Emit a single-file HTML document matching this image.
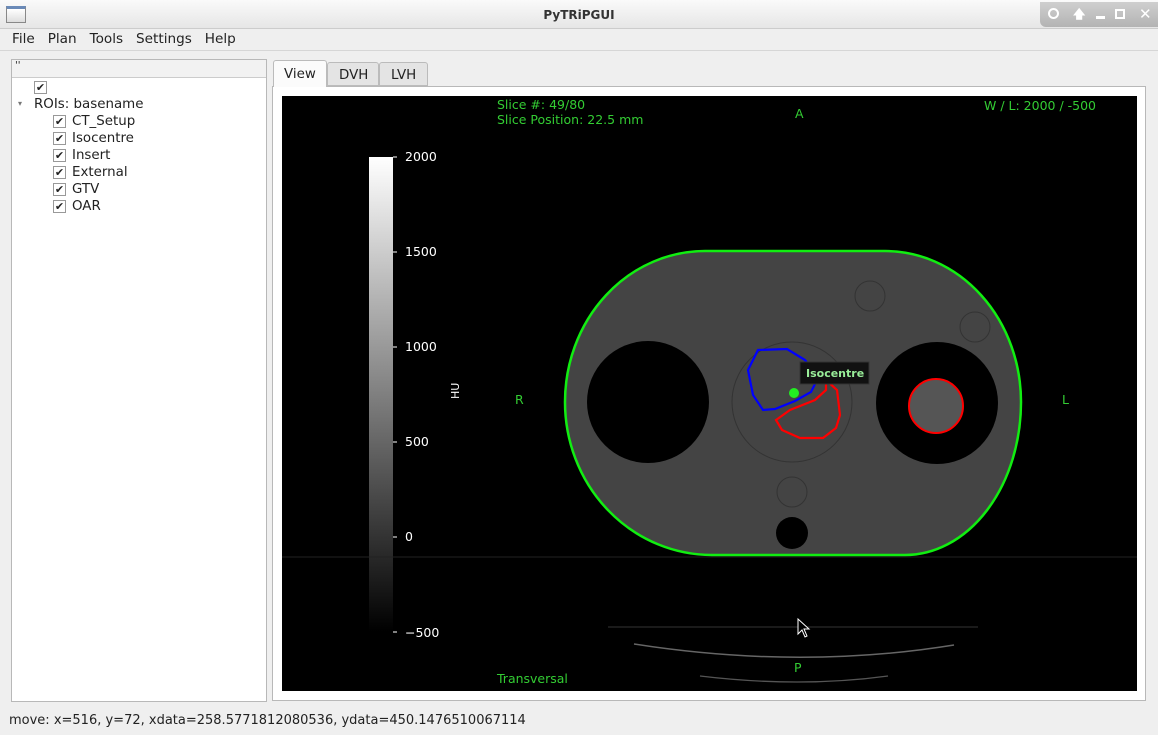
<!DOCTYPE html>
<html><head><meta charset="utf-8"><style>
*{margin:0;padding:0;box-sizing:border-box}
body{width:1158px;height:735px;background:#efefef;font-family:"DejaVu Sans","Liberation Sans",sans-serif;font-size:13.4px;color:#222;position:relative;overflow:hidden}
.a{position:absolute;white-space:nowrap}
.cb{position:absolute;width:13px;height:13px;border:1px solid #999;background:#fff;font-size:11px;line-height:11px;text-align:center;color:#222}
</style></head><body>
<div class="a" style="left:0;top:0;width:1158px;height:29px;background:linear-gradient(#fafafa,#e6e6e6);border-bottom:1px solid #ccc"></div>
<div class="a" style="left:6px;top:6px;width:20px;height:17px;border:1px solid #888;background:linear-gradient(#fff,#ddd);border-top:3px solid #6a8ab8"></div>
<div class="a" style="left:0;width:1158px;top:8px;text-align:center;font-weight:bold;font-size:12px;color:#333">PyTRiPGUI</div>
<div class="a" style="left:1040px;top:2px;width:118px;height:25px;background:linear-gradient(#cfcfcf,#b3b3b3);border-radius:0 0 0 6px;color:#fff;font-size:12px;font-weight:bold">
<span class="a" style="left:8px;top:6px;width:11px;height:11px;border:2px solid #fff;border-radius:50%"></span><span class="a" style="left:33px;top:3px">🡅</span><span class="a" style="left:56px;top:14px;width:9px;height:3px;background:#fff"></span><span class="a" style="left:75px;top:7px;width:10px;height:10px;border:2px solid #fff"></span><span class="a" style="left:99px;top:3px;font-size:15px">✕</span></div>
<div class="a" style="left:12px;top:31px;font-size:13.6px">File&nbsp;&nbsp;&nbsp;Plan&nbsp;&nbsp;&nbsp;Tools&nbsp;&nbsp;&nbsp;Settings&nbsp;&nbsp;&nbsp;Help</div>
<div class="a" style="left:0;top:50px;width:1158px;height:1px;background:#d6d6d6"></div>
<div class="a" style="left:11px;top:59px;width:256px;height:643px;background:#fff;border:1px solid #b8b8b8"></div>
<div class="a" style="left:12px;top:60px;width:254px;height:18px;background:#f2f2f2;border-bottom:1px solid #ccc;font-size:10px;padding-left:3px">''</div>
<div class="cb" style="left:34px;top:81px">✔</div>
<div class="a" style="left:18px;top:99px;font-size:8px;color:#777">▾</div>
<div class="a" style="left:34px;top:97px">ROIs: basename</div>
<div class="cb" style="left:53px;top:115px">✔</div><div class="a" style="left:72px;top:114px">CT_Setup</div>
<div class="cb" style="left:53px;top:132px">✔</div><div class="a" style="left:72px;top:131px">Isocentre</div>
<div class="cb" style="left:53px;top:149px">✔</div><div class="a" style="left:72px;top:148px">Insert</div>
<div class="cb" style="left:53px;top:166px">✔</div><div class="a" style="left:72px;top:165px">External</div>
<div class="cb" style="left:53px;top:183px">✔</div><div class="a" style="left:72px;top:182px">GTV</div>
<div class="cb" style="left:53px;top:200px">✔</div><div class="a" style="left:72px;top:199px">OAR</div>
<div class="a" style="left:272px;top:86px;width:874px;height:615px;background:#fff;border:1px solid #b8b8b8"></div>
<div class="a" style="left:273px;top:60px;width:54px;height:27px;background:#fbfbfb;border:1px solid #bbb;border-bottom:none;border-radius:3px 3px 0 0;padding:6px 0 0 10px">View</div>
<div class="a" style="left:327px;top:62px;width:52px;height:24px;background:#e4e4e4;border:1px solid #bbb;border-radius:3px 3px 0 0;padding:5px 0 0 11px">DVH</div>
<div class="a" style="left:379px;top:62px;width:49px;height:24px;background:#e4e4e4;border:1px solid #bbb;border-radius:3px 3px 0 0;padding:5px 0 0 11px">LVH</div>
<svg class="a" style="left:282px;top:96px" width="855" height="595" viewBox="282 96 855 595" font-family="DejaVu Sans, Liberation Sans, sans-serif">
<defs><linearGradient id="g" x1="0" y1="0" x2="0" y2="1"><stop offset="0" stop-color="#fff"/><stop offset="1" stop-color="#000"/></linearGradient></defs>
<rect x="282" y="96" width="855" height="595" fill="#000"/>
<rect x="369" y="157" width="24" height="475" fill="url(#g)"/>
<g fill="#fff" font-size="12.5"><text x="405" y="161">2000</text><text x="405" y="256">1500</text><text x="405" y="351">1000</text><text x="405" y="446">500</text><text x="405" y="541">0</text><text x="405" y="637">−500</text></g>
<g stroke="#fff"><line x1="393" y1="157" x2="397" y2="157"/><line x1="393" y1="252" x2="397" y2="252"/><line x1="393" y1="347" x2="397" y2="347"/><line x1="393" y1="442" x2="397" y2="442"/><line x1="393" y1="537" x2="397" y2="537"/><line x1="393" y1="632" x2="397" y2="632"/></g>
<text x="454" y="404" fill="#fff" font-size="11" transform="rotate(-90 454 399)">HU</text>
<g fill="#3c3" font-size="12.5"><text x="497" y="109">Slice #: 49/80</text><text x="497" y="124">Slice Position: 22.5 mm</text><text x="984" y="110">W / L: 2000 / -500</text><text x="795" y="118">A</text><text x="515" y="404">R</text><text x="1062" y="404">L</text><text x="794" y="672">P</text><text x="497" y="683">Transversal</text></g>
<path d="M705 251 L885 251 A136 151 0 0 1 1021 402 A116 153 0 0 1 905 555 L712 555 A147 153 0 0 1 565 402 A140 151 0 0 1 705 251 Z" fill="#444" stroke="#1e1" stroke-width="2.5"/>
<circle cx="648" cy="402" r="61" fill="#000"/>
<circle cx="937" cy="403" r="61" fill="#000"/>
<circle cx="936" cy="406" r="27" fill="#555" stroke="#f00" stroke-width="2"/>
<circle cx="792" cy="533" r="16" fill="#000"/>
<g fill="none" stroke="#333"><circle cx="870" cy="296" r="15"/><circle cx="975" cy="327" r="15"/><circle cx="792" cy="402" r="60"/><circle cx="792" cy="492" r="15"/></g>
<path d="M758 350 L787 349 L805 360 L818 378 L811 392 L795 401 L775 409 L763 410 L753 395 L748 370 Z" fill="none" stroke="#00f" stroke-width="2.2"/>
<path d="M826 380 L837 390 L840 415 L836 428 L823 438 L800 438 L782 430 L776 420 L790 410 L815 400 L826 390 Z" fill="none" stroke="#f00" stroke-width="2.2"/>
<circle cx="794" cy="393" r="5" fill="#2e2"/>
<rect x="800" y="362" width="69" height="22" fill="#111" stroke="#333"/>
<text x="806" y="377" fill="#9e9" font-size="11" font-weight="bold">Isocentre</text>
<line x1="282" y1="557" x2="1137" y2="557" stroke="#222"/>
<line x1="608" y1="627" x2="978" y2="627" stroke="#333"/>
<path d="M634 644 Q800 670 954 645" fill="none" stroke="#666" stroke-width="1.5"/>
<path d="M700 676 Q800 688 888 676" fill="none" stroke="#555" stroke-width="1.3"/>
<path d="M798 619 L798 634 L802 630 L805 637 L807 636 L804 629 L809 629 Z" fill="#000" stroke="#fff" stroke-width="1"/>
</svg>
<div class="a" style="left:9px;top:713px;font-size:13px">move: x=516, y=72, xdata=258.5771812080536, ydata=450.1476510067114</div>
</body></html>
